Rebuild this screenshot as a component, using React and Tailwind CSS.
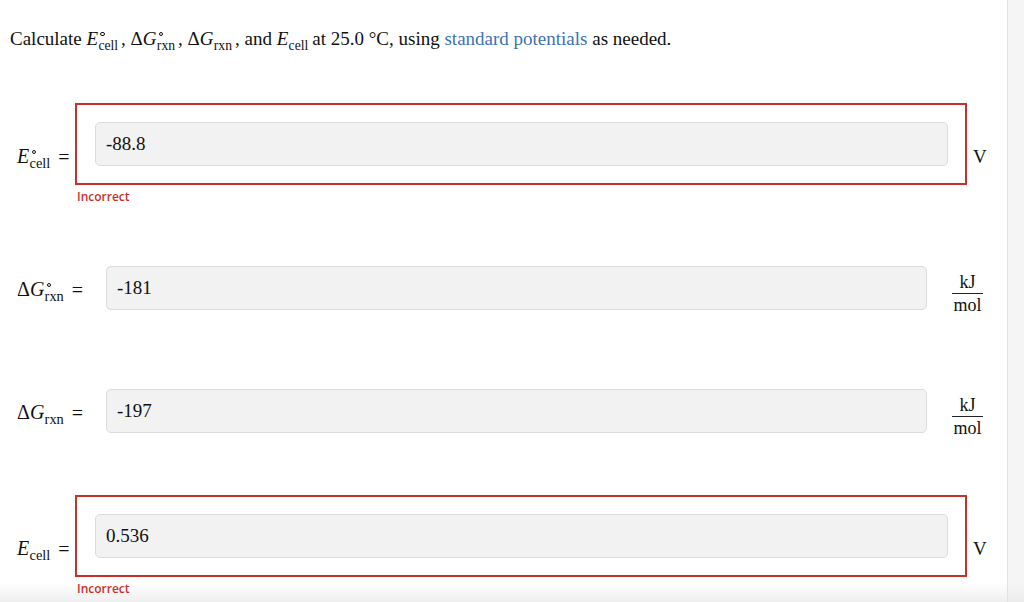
import React from "react";

const serif = { fontFamily: '"Liberation Serif", "Times New Roman", serif' };

function Ring() {
  return (
    <span className="absolute left-[0.12em] top-[0.2em] w-[0.22em] h-[0.22em] rounded-full border border-current" />
  );
}

function Sym({ base, delta, deg, sub }) {
  return (
    <span className="inline-flex items-baseline whitespace-nowrap">
      {delta && <span>Δ</span>}
      <i>{base}</i>
      <span className="relative">
        <span className="text-[0.72em] relative top-[0.34em] ml-[0.02em]">{sub}</span>
        {deg && <Ring />}
      </span>
    </span>
  );
}

function Input({ value, className = "" }) {
  return (
    <div
      className={
        "h-[44px] rounded-[5px] border border-[#dcdcdc] bg-[#f2f2f2] pl-[10px] flex items-center text-[19px] text-[#111] " +
        className
      }
      style={serif}
    >
      {value}
    </div>
  );
}

function Frac() {
  return (
    <div className="inline-flex flex-col items-center text-[18px] leading-[20px] text-[#111]" style={serif}>
      <span className="px-[1px]">kJ</span>
      <span className="w-[31px] h-px bg-[#222] my-[1px]" />
      <span>mol</span>
    </div>
  );
}

function Incorrect() {
  return (
    <div
      className="pl-[77px] mt-[4px] text-[12px] leading-[16px] font-semibold text-[#c9302c]"
      style={{ fontFamily: '"Open Sans", "Noto Sans", sans-serif' }}
    >
      Incorrect
    </div>
  );
}

function BoxRow({ label, value }) {
  return (
    <div className="flex items-start h-[82px]">
      <div className="w-[75px] pl-[17px] mt-[44px] h-[20px] text-[20px] leading-[20px] flex items-center text-[#111]">
        {label}
        <span className="ml-[8px]">=</span>
      </div>
      <div className="w-[892px] h-[82px] border-2 border-[#c9302c] pt-[17px] pl-[18px] pr-[17px]">
        <Input value={value} />
      </div>
      <div className="ml-[6px] mt-[44px] text-[19px] leading-[20px] text-[#111]">V</div>
    </div>
  );
}

function PlainRow({ label, value }) {
  return (
    <div className="flex items-start h-[44px]">
      <div className="w-[106px] pl-[17px] mt-[14px] h-[20px] text-[20px] leading-[20px] flex items-center text-[#111]">
        {label}
        <span className="ml-[8px]">=</span>
      </div>
      <Input value={value} className="w-[821px]" />
      <div className="ml-[25px] mt-[5px]">
        <Frac />
      </div>
    </div>
  );
}

export default function App() {
  return (
    <div className="flex w-[1024px] h-[602px] overflow-hidden bg-white" style={serif}>
      <div className="flex-1 h-full bg-[linear-gradient(to_bottom,#ffffff_582px,#efefef_602px)]">
        <div className="pt-[28px]">
          <div className="pl-[10px] h-[22px] text-[19px] leading-[22px] text-[#111] whitespace-nowrap">
            Calculate <Sym base="E" deg sub="cell" /><span className="ml-[3px]">,</span>{" "}
            <Sym delta base="G" deg sub="rxn" /><span className="ml-[3px]">,</span>{" "}
            <Sym delta base="G" sub="rxn" /><span className="ml-[3px]">,</span> and{" "}
            <Sym base="E" sub="cell" /><span className="ml-[4px]">at 25.0 °C, using </span>
            <span className="text-[#3d72b5]">standard potentials</span> as needed.
          </div>
          <div className="mt-[53px]">
            <BoxRow label={<Sym base="E" deg sub="cell" />} value="-88.8" />
            <Incorrect />
          </div>
          <div className="mt-[61px]">
            <PlainRow label={<Sym delta base="G" deg sub="rxn" />} value="-181" />
          </div>
          <div className="mt-[79px]">
            <PlainRow label={<Sym delta base="G" sub="rxn" />} value="-197" />
          </div>
          <div className="mt-[62px]">
            <BoxRow label={<Sym base="E" sub="cell" />} value="0.536" />
            <Incorrect />
          </div>
        </div>
      </div>
      <div className="w-[17px] h-full border-l border-[#e2e2e2] bg-[linear-gradient(to_bottom,#f5f5f5_582px,#ececec_602px)]" />
    </div>
  );
}
